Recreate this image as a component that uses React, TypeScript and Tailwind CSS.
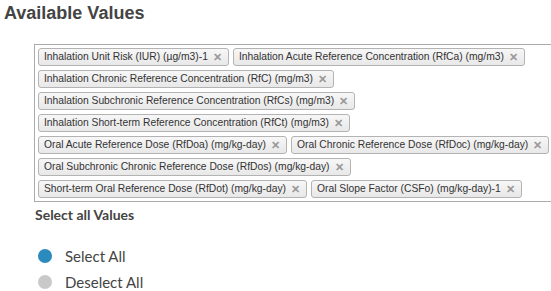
import React from "react";

const values = [
    "Inhalation Unit Risk (IUR) (µg/m3)-1",
    "Inhalation Acute Reference Concentration (RfCa) (mg/m3)",
    "Inhalation Chronic Reference Concentration (RfC) (mg/m3)",
    "Inhalation Subchronic Reference Concentration (RfCs) (mg/m3)",
    "Inhalation Short-term Reference Concentration (RfCt) (mg/m3)",
    "Oral Acute Reference Dose (RfDoa) (mg/kg-day)",
    "Oral Chronic Reference Dose (RfDoc) (mg/kg-day)",
    "Oral Subchronic Chronic Reference Dose (RfDos) (mg/kg-day)",
    "Short-term Oral Reference Dose (RfDot) (mg/kg-day)",
    "Oral Slope Factor (CSFo) (mg/kg-day)-1",
];

function Tag({ label }: { label: string }) {
    return (
        <li className="flex h-[18px] items-center rounded-[3px] border border-[#b3b3b3] bg-gradient-to-b from-[#f7f7f7] to-[#e8e8e8] pl-[5px] pr-[6px] text-[10.3px] leading-none text-[#333]">
            <span>{label}</span>
            <span className="ml-[5px] text-[11px] font-bold text-[#999]">✕</span>
        </li>
    );
}

export default function App() {
    return (
        <div
            className="h-[291px] w-[551px] overflow-hidden bg-white"
            style={{ fontFamily: '"Liberation Sans", Arial, sans-serif' }}
        >
            <h1 className="pl-[4px] pt-[1px] text-[18px] font-bold leading-[24px] text-[#444]">Available Values</h1>

            <div className="ml-[34px] mt-[19px] w-[530px] border border-[#aaa] pb-[3px] pl-[3px] pt-[2px]">
                <ul className="flex flex-wrap gap-x-[4px] gap-y-[4px] pt-px">
                    {values.map((v) => (
                        <Tag key={v} label={v} />
                    ))}
                </ul>
            </div>

            <div className="ml-[35px] mt-[3px]" style={{ fontFamily: "Lato, sans-serif" }}>
                <h2 className="text-[14px] font-bold leading-[20px] text-[#444]">Select all Values</h2>
                <div className="mt-[22px] flex flex-col gap-[8px]">
                    <label className="flex items-center gap-[13px] text-[15px] leading-[18px] text-[#444]">
                        <span className="ml-[3px] h-[14px] w-[14px] rounded-full bg-[#2b8bbd]" />
                        Select All
                    </label>
                    <label className="flex items-center gap-[13px] text-[15px] leading-[18px] text-[#444]">
                        <span className="ml-[3px] h-[14px] w-[14px] rounded-full bg-[#c9c9c9]" />
                        Deselect All
                    </label>
                </div>
            </div>
        </div>
    );
}
